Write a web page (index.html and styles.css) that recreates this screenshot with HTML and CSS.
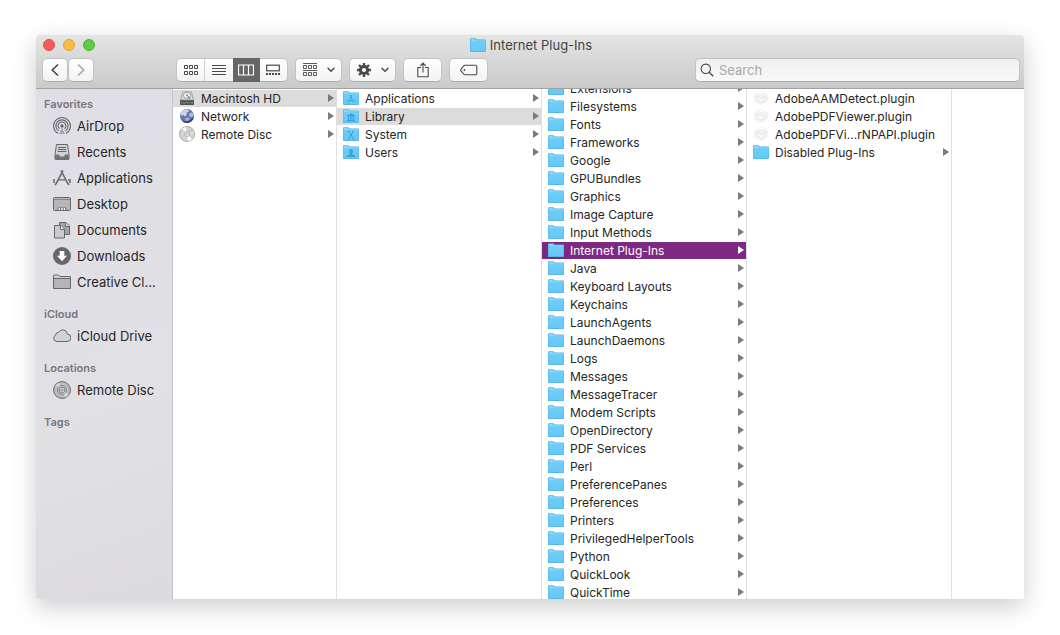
FILE: index.html
```html
<!DOCTYPE html>
<html lang="en">
<head>
	<meta charset="utf-8">
	<title>Internet Plug-Ins</title>
	<meta name="viewport" content="width=device-width, initial-scale=1">
	<link rel="stylesheet" href="styles.css">
</head>
<body>

<!-- shared icons -->
<svg class="sprite" aria-hidden="true">
	<defs>
		<linearGradient id="blue" x1="0" y1="0" x2="0" y2="1">
			<stop offset="0" stop-color="#6fcdf8"/>
			<stop offset="1" stop-color="#66c8f6"/>
		</linearGradient>
	</defs>
	<symbol id="folder" viewBox="0 0 16 14">
		<path fill="#4fb0e2" d="M0 1.2Q0 .2 1 .2H5Q5.6.2 6 .8L6.5 1.6H15Q16 1.6 16 2.6V13Q16 14 15 14H1Q0 14 0 13Z"/>
		<path fill="#8ad8fb" d="M.7 1.4Q.7.9 1.2.9H4.9L5.8 2.3H15.3V4H.7Z"/>
		<rect x=".5" y="3" width="15" height="10.3" fill="url(#blue)"/>
	</symbol>
	<symbol id="plugin" viewBox="0 0 16 16">
		<path fill="#f3f3f3" stroke="#e9e9e9" stroke-width=".6" d="M1 5.5 3.500 3 8 4.600 12.500 3 15 5.500 14 11 8 14.500 2 11Z"/>
		<path fill="#fbfbfb" stroke="#dedede" stroke-width=".7" d="M4 6.3 8 8.6 12 6.3 11 10.4 8 12 5 10.4Z"/>
		<path stroke="#e8e8e8" stroke-width="1" stroke-dasharray="1 1" fill="none" d="M5 2 8 1 11 2M1 12 3 14"/>
	</symbol>
	<symbol id="disc" viewBox="0 0 18 18">
		<circle cx="9" cy="9" r="8.4" fill="#bcbcbf" stroke="#68686b" stroke-width="1"/>
		<path fill="#d9d9dc" d="M9 9 2.5 4.6A8 8 0 0 1 6 1.7ZM9 9 15.5 13.4A8 8 0 0 1 12 16.3Z"/>
		<circle cx="9" cy="9" r="4.6" fill="none" stroke="#7d7d80" stroke-width=".7"/>
		<circle cx="9" cy="9" r="2.9" fill="#d8d8db" stroke="#727275" stroke-width=".8"/>
		<circle cx="9" cy="9" r="1.1" fill="#eee" stroke="#727275" stroke-width=".7"/>
	</symbol>
	<symbol id="chevron" viewBox="0 0 8 6">
		<path d="M1 1.2 4 4.3 7 1.2" fill="none" stroke="#4a4a4a" stroke-width="1.4" stroke-linecap="round"/>
	</symbol>
</svg>

<main class="window">
	<header class="toolbar">
		<div class="titlebar">
			<div class="lights">
				<button class="light red" aria-label="Close"></button>
				<button class="light yellow" aria-label="Minimize"></button>
				<button class="light green" aria-label="Zoom"></button>
			</div>
			<h1 class="title"><svg class="folder"><use href="#folder"/></svg>Internet Plug-Ins</h1>
		</div>
		<div class="tools">
			<div class="nav">
				<button class="btn" aria-label="Back"><svg width="10" height="14" viewBox="0 0 10 14"><path d="M8 1.5 2.2 7 8 12.5" fill="none" stroke="#404040" stroke-width="1.5"/></svg></button>
				<button class="btn" aria-label="Forward"><svg width="10" height="14" viewBox="0 0 10 14"><path d="M2 1.5 7.8 7 2 12.5" fill="none" stroke="#a6a6a6" stroke-width="1.5"/></svg></button>
			</div>
			<div class="views">
				<button aria-label="Icons"><svg width="16" height="12" viewBox="0 0 16 12"><path d="M1.5 1.5h3v3h-3zM6.5 1.5h3v3h-3zM11.5 1.5h3v3h-3zM1.5 7.5h3v3h-3zM6.5 7.5h3v3h-3zM11.5 7.5h3v3h-3z" fill="none" stroke="#4a4a4a"/></svg></button>
				<button aria-label="List"><svg width="14" height="12" viewBox="0 0 14 12"><path d="M0 1.5h14M0 4.5h14M0 7.5h14M0 10.5h14" stroke="#4a4a4a"/></svg></button>
				<button class="active" aria-label="Columns"><svg width="16" height="12" viewBox="0 0 16 12"><path d="M.5 1v10M5.5 1v10M10.5 1v10M15.5 1v10M0 1h16M0 11h16" fill="none" stroke="#fff" stroke-width="1.2"/></svg></button>
				<button aria-label="Gallery"><svg width="14" height="12" viewBox="0 0 14 12"><rect x=".7" y="1.2" width="12.6" height="5.6" fill="none" stroke="#4a4a4a" stroke-width="1.2"/><path d="M0 10h14" stroke="#4a4a4a" stroke-width="2" stroke-dasharray="2 1"/></svg></button>
			</div>
			<button class="btn menu" aria-label="Group items"><svg width="16" height="14" viewBox="0 0 16 14"><path d="M1 .5h14M1 7.5h14M1.5 2.5h3v3h-3zM6.5 2.5h3v3h-3zM11.5 2.5h3v3h-3zM1.5 9.5h3v3h-3zM6.5 9.5h3v3h-3zM11.5 9.5h3v3h-3z" fill="none" stroke="#4a4a4a" stroke-width=".9"/></svg><svg class="chevron"><use href="#chevron"/></svg></button>
			<button class="btn menu" aria-label="Action"><svg width="16" height="16" viewBox="0 0 16 16"><circle cx="8" cy="8" r="3.6" fill="none" stroke="#4a4a4a" stroke-width="3"/><path d="M8 1v3M8 12v3M1 8h3M12 8h3M3 3l2.2 2.2M10.8 10.8 13 13M3 13l2.2-2.2M10.8 5.2 13 3" stroke="#4a4a4a" stroke-width="2.4"/></svg><svg class="chevron"><use href="#chevron"/></svg></button>
			<button class="btn wide" aria-label="Share"><svg width="12" height="16" viewBox="0 0 12 16"><path d="M4 5.5H.8v9.3h10.4V5.5H8M6 10.5V1M3.2 3.8 6 1l2.8 2.8" fill="none" stroke="#4a4a4a" stroke-width="1.1"/></svg></button>
			<button class="btn wide" aria-label="Edit tags"><svg width="18" height="12" viewBox="0 0 18 12"><path d="M5.2 1.2H15.4Q16.8 1.2 16.8 2.6V9.4Q16.8 10.8 15.4 10.8H5.2Q4.4 10.8 3.8 10.2L1.2 7.2Q.4 6 1.2 4.8L3.8 1.8Q4.4 1.2 5.2 1.2Z" fill="none" stroke="#4a4a4a" stroke-width="1.1"/><circle cx="4.4" cy="6" r=".9" fill="#4a4a4a"/></svg></button>
			<label class="search">
				<svg width="14" height="14" viewBox="0 0 14 14"><circle cx="5.8" cy="5.8" r="4.7" fill="none" stroke="#4a4a4a" stroke-width="1.1"/><path d="m9.2 9.2 4 4" stroke="#4a4a4a" stroke-width="1.3"/></svg>
				<input type="search" placeholder="Search" aria-label="Search">
			</label>
		</div>
	</header>

	<div class="content">
		<nav class="sidebar">
			<h2>Favorites</h2>
			<ul>
				<li><a href="#"><svg viewBox="0 0 18 18"><g fill="none" stroke="#68686b" stroke-width="1.1"><path d="M5 16.3A8.4 8.4 0 1 1 13 16.3"/><path d="M5.6 14A6.1 6.1 0 1 1 12.4 14"/><path d="M6.4 11.8A3.9 3.9 0 1 1 11.6 11.8"/></g><circle cx="9" cy="9" r="1.7" fill="#68686b"/><path d="M9 10.500 12 17H6Z" fill="#a5a5a9"/></svg>AirDrop</a></li>
				<li><a href="#"><svg viewBox="0 0 18 18"><path d="M3.5 1.5h11l1.5 10v4.2q0 .8-.8.8H2.8q-.8 0-.8-.8v-4.2Z" fill="#d3d3d6" stroke="#68686b"/><path d="M5 4.5h8M4.8 6.5h8.4M4.6 8.5h8.8" stroke="#68686b"/><path d="M2 11.5h4l1 2h4l1-2h4v4.2q0 .8-.8.8H2.8q-.8 0-.8-.8Z" fill="#747477"/></svg>Recents</a></li>
				<li><a href="#"><svg viewBox="0 0 18 18"><g fill="none" stroke="#68686b" stroke-width="1.6"><path d="M8 1.5 14.5 14l1.5 2M10 1.5 3.5 14l-1.5 2"/><path d="M0 11h2M5.5 10.8h6.5M15 11h3M0 13h2M16 13h2" stroke-width="1.3"/></g></svg>Applications</a></li>
				<li><a href="#"><svg viewBox="0 0 18 18"><rect x=".5" y="2.5" width="17" height="13" rx="1" fill="#b6b6b9" stroke="#68686b"/><path d="M1 4.5h16" stroke="#89898c"/><path d="M4.5 15v-2.5h9V15Z" fill="#68686b"/><path d="M5.5 14h7" stroke="#eee" stroke-width="2" stroke-dasharray="1.6 1"/></svg>Desktop</a></li>
				<li><a href="#"><svg viewBox="0 0 18 18"><path d="M6.5 1.5H13l3.5 3.5v8.5h-10Z" fill="#a4a4a8" stroke="#68686b"/><path d="M12.5 1.5v4h4" fill="#ddd" stroke="#68686b"/><path d="M1.5 4.5H8L11.5 8v9h-10Z" fill="#cbcbce" stroke="#68686b"/><path d="M7.5 4.5v4h4" fill="#eee" stroke="#68686b"/></svg>Documents</a></li>
				<li><a href="#"><svg viewBox="0 0 18 18"><circle cx="9" cy="9" r="9" fill="#68686b"/><path d="M6.7 4h4.6v4.8H14L9 14.2 4 8.8h2.7Z" fill="#fff"/></svg>Downloads</a></li>
				<li><a href="#"><svg viewBox="0 0 18 18"><path d="M.5 2.5q0-.5.5-.5h4.5l1.2 1.5H17q.5 0 .5.5v11.5H.5Z" fill="#d3d3d6" stroke="#68686b"/><path d="M1 6h16v9H1Z" fill="#b5b5b8"/><path d="M1 5.5h16" stroke="#68686b"/></svg>Creative Cl...</a></li>
			</ul>
			<h2>iCloud</h2>
			<ul>
				<li><a href="#"><svg viewBox="0 0 18 18"><path d="M3.800 14.500A3.300 3.300 0 0 1 2.600 8.200 2.800 2.800 0 0 1 5.600 5.400 4.600 4.600 0 0 1 14.300 7.100 3.700 3.700 0 0 1 14 14.500Z" fill="#d3d3d6" stroke="#68686b"/></svg>iCloud Drive</a></li>
			</ul>
			<h2>Locations</h2>
			<ul>
				<li><a href="#"><svg><use href="#disc"/></svg>Remote Disc</a></li>
			</ul>
			<h2>Tags</h2>
		</nav>

		<div class="column narrow">
			<ul>
				<li><a class="parent open" href="#"><svg viewBox="0 0 16 16"><path d="M3.3 1h9.4L15 10v4.5H1V10Z" fill="#9ba3a6"/><path d="M4 1.5h8L13.8 9.5H2.2Z" fill="#d5dbdd"/><ellipse cx="8" cy="5.3" rx="3.7" ry="3.1" fill="#eef2f3" stroke="#7f898d" stroke-width=".8"/><path d="m8 5 2.8 3.8" stroke="#60696d"/><circle cx="8" cy="5.2" r="1" fill="#899498"/><rect x="1" y="10.3" width="14" height="4.7" rx=".8" fill="#4d5254"/><path d="M2 12.8h9" stroke="#85898b"/><circle cx="13" cy="12.8" r=".7" fill="#ccc"/></svg>Macintosh HD</a></li>
				<li><a class="parent" href="#"><svg viewBox="0 0 16 16"><circle cx="8" cy="8" r="7" fill="#6675aa"/><path d="M2 4.5Q5 .5 9 1.5L10 3.5 7.5 5 8 7 5.5 8.5 4.5 7 2 8Z" fill="#cbd3e9"/><path d="m10.5 5 3-.5 1.3 3-2.2 1.8L10 8Z" fill="#aebbdc"/><path d="m6 10 3-.5 2 2-1.5 3H7Z" fill="#a4b1d5"/><path d="M14.7 9A7 7 0 0 1 2.5 12.5Q9 15 14.7 9Z" fill="#323e77"/></svg>Network</a></li>
				<li><a class="parent" href="#"><svg viewBox="0 0 16 16"><circle cx="8" cy="8" r="7.5" fill="#d4d4d4" stroke="#999" stroke-width=".8"/><path d="M8 8 3.2 2.8A7 7 0 0 1 7 1Z" fill="#fafafa"/><path d="M8 8 12.8 13.2A7 7 0 0 1 9 15Z" fill="#fff"/><path d="M8 8 14.7 5.6A7 7 0 0 1 15 8Z" fill="#dfeab3"/><path d="M8 8 12.5 2.6 14 4.3Z" fill="#cbb9df"/><path d="M8 8 1.3 10.4A7 7 0 0 1 1 8Z" fill="#bfdfd2"/><circle cx="8" cy="8" r="2.6" fill="#eee" stroke="#a5a5a5" stroke-width=".7"/><circle cx="8" cy="8" r="1.1" fill="#fff" stroke="#999" stroke-width=".6"/></svg>Remote Disc</a></li>
			</ul>
		</div>

		<div class="column">
			<ul>
				<li><a class="parent" href="#"><svg class="folder" viewBox="0 0 16 14"><use href="#folder"/><path d="M7.3 4 11 12M8.7 4 5 12M3 9.5h1.5M6.5 9.5h3M11.5 9.5H13" fill="none" stroke="#3b9fd8" stroke-width=".9"/></svg>Applications</a></li>
				<li><a class="parent open" href="#"><svg class="folder" viewBox="0 0 16 14"><use href="#folder"/><path d="M4 6.5 8 4.2l4 2.3v.7H4ZM4 11h8v1.2H4ZM5 7h1v4H5ZM7 7h.8v4H7ZM8.6 7h.8v4h-.8ZM10.3 7h1v4h-1Z" fill="#3b9fd8"/></svg>Library</a></li>
				<li><a class="parent" href="#"><svg class="folder" viewBox="0 0 16 14"><use href="#folder"/><path d="M5.7 4.5 10.5 12M10.3 4.5 5.5 12M4.8 4.5H7M9.3 4.5H11M4.6 12h1.8M9.4 12h2" fill="none" stroke="#3b9fd8"/></svg>System</a></li>
				<li><a class="parent" href="#"><svg class="folder" viewBox="0 0 16 14"><use href="#folder"/><path d="M8 4q2 0 2 2.2 0 1.5-1 2.3v.8l2.5.9q.8.4.8 1.8H3.7q0-1.4.8-1.8L7 9.3v-.8q-1-.8-1-2.3Q6 4 8 4Z" fill="#3b9fd8"/></svg>Users</a></li>
			</ul>
		</div>

		<div class="column scrolled">
			<ul>
				<li><a class="parent" href="#"><svg class="folder"><use href="#folder"/></svg>Extensions</a></li>
				<li><a class="parent" href="#"><svg class="folder"><use href="#folder"/></svg>Filesystems</a></li>
				<li><a class="parent" href="#"><svg class="folder"><use href="#folder"/></svg>Fonts</a></li>
				<li><a class="parent" href="#"><svg class="folder"><use href="#folder"/></svg>Frameworks</a></li>
				<li><a class="parent" href="#"><svg class="folder"><use href="#folder"/></svg>Google</a></li>
				<li><a class="parent" href="#"><svg class="folder"><use href="#folder"/></svg>GPUBundles</a></li>
				<li><a class="parent" href="#"><svg class="folder"><use href="#folder"/></svg>Graphics</a></li>
				<li><a class="parent" href="#"><svg class="folder"><use href="#folder"/></svg>Image Capture</a></li>
				<li><a class="parent" href="#"><svg class="folder"><use href="#folder"/></svg>Input Methods</a></li>
				<li><a class="parent selected" href="#"><svg class="folder"><use href="#folder"/></svg>Internet Plug-Ins</a></li>
				<li><a class="parent" href="#"><svg class="folder"><use href="#folder"/></svg>Java</a></li>
				<li><a class="parent" href="#"><svg class="folder"><use href="#folder"/></svg>Keyboard Layouts</a></li>
				<li><a class="parent" href="#"><svg class="folder"><use href="#folder"/></svg>Keychains</a></li>
				<li><a class="parent" href="#"><svg class="folder"><use href="#folder"/></svg>LaunchAgents</a></li>
				<li><a class="parent" href="#"><svg class="folder"><use href="#folder"/></svg>LaunchDaemons</a></li>
				<li><a class="parent" href="#"><svg class="folder"><use href="#folder"/></svg>Logs</a></li>
				<li><a class="parent" href="#"><svg class="folder"><use href="#folder"/></svg>Messages</a></li>
				<li><a class="parent" href="#"><svg class="folder"><use href="#folder"/></svg>MessageTracer</a></li>
				<li><a class="parent" href="#"><svg class="folder"><use href="#folder"/></svg>Modem Scripts</a></li>
				<li><a class="parent" href="#"><svg class="folder"><use href="#folder"/></svg>OpenDirectory</a></li>
				<li><a class="parent" href="#"><svg class="folder"><use href="#folder"/></svg>PDF Services</a></li>
				<li><a class="parent" href="#"><svg class="folder"><use href="#folder"/></svg>Perl</a></li>
				<li><a class="parent" href="#"><svg class="folder"><use href="#folder"/></svg>PreferencePanes</a></li>
				<li><a class="parent" href="#"><svg class="folder"><use href="#folder"/></svg>Preferences</a></li>
				<li><a class="parent" href="#"><svg class="folder"><use href="#folder"/></svg>Printers</a></li>
				<li><a class="parent" href="#"><svg class="folder"><use href="#folder"/></svg>PrivilegedHelperTools</a></li>
				<li><a class="parent" href="#"><svg class="folder"><use href="#folder"/></svg>Python</a></li>
				<li><a class="parent" href="#"><svg class="folder"><use href="#folder"/></svg>QuickLook</a></li>
				<li><a class="parent" href="#"><svg class="folder"><use href="#folder"/></svg>QuickTime</a></li>
			</ul>
		</div>

		<div class="column">
			<ul>
				<li><a href="#"><svg><use href="#plugin"/></svg>AdobeAAMDetect.plugin</a></li>
				<li><a href="#"><svg><use href="#plugin"/></svg>AdobePDFViewer.plugin</a></li>
				<li><a href="#"><svg><use href="#plugin"/></svg>AdobePDFVi...rNPAPI.plugin</a></li>
				<li><a class="parent" href="#"><svg class="folder"><use href="#folder"/></svg>Disabled Plug-Ins</a></li>
			</ul>
		</div>
	</div>
</main>

</body>
</html>
```
FILE: styles.css
```css
* {
	box-sizing: border-box;
}

html, body {
	height: 100%;
	margin: 0;
}

body {
	display: flex;
	padding: 35px 36px 36px;
	overflow: hidden;
	background: #fff;
	color: #262626;
	font-family: Inter, "Liberation Sans", sans-serif;
	font-size: 12px;
}

ul {
	list-style: none;
	margin: 0;
	padding: 0;
}

a {
	color: inherit;
	text-decoration: none;
}

button, input {
	font: inherit;
	padding: 0;
	border: none;
}

svg {
	flex: none;
}

.sprite {
	position: absolute;
	width: 0;
	height: 0;
}

.window {
	flex: 1;
	min-width: 0;
	display: flex;
	flex-direction: column;
	border-radius: 4px 4px 2px 2px;
	overflow: hidden;
	background: #fff;
	box-shadow: 0 8px 24px rgba(0,0,0,0.2);
}

/* title and tool bar */
.toolbar {
	flex: none;
	background: linear-gradient(#e4e4e4, #cacaca);
	border-bottom: 1px solid #a2a2a2;
	padding: 0 4px 6px 6px;
}

.titlebar {
	display: grid;
	grid-template-columns: 1fr auto 1fr;
	align-items: center;
	height: 20px;
	margin-bottom: 3px;
	padding: 0 1px;
}

.lights {
	display: flex;
	gap: 8px;
}

.light {
	width: 12px;
	height: 12px;
	border-radius: 50%;
}

.red {
	background: #f25e57;
	border: 1px solid #dd4a44;
}

.yellow {
	background: #f8bd45;
	border: 1px solid #dfa236;
}

.green {
	background: #5fcb42;
	border: 1px solid #4bae31;
}

.title {
	display: flex;
	align-items: center;
	gap: 4px;
	margin: 0;
	font-size: 13px;
	line-height: 20px;
	font-weight: 400;
	color: #444;
}

.tools {
	display: flex;
	gap: 7px;
}

.tools button {
	display: flex;
	align-items: center;
	justify-content: center;
}

.btn, .views, .search {
	height: 24px;
	border: 1px solid #c3c3c3;
	border-bottom-color: #adadad;
	border-radius: 5px;
	background: linear-gradient(#fefefe, #f3f3f3);
}

.nav {
	display: flex;
	margin-right: 75px;
}

.nav .btn {
	width: 26px;
}

.views {
	display: flex;
	width: 112px;
}

.views button {
	flex: 1;
	background: none;
}

.views button:first-child {
	border-right: 1px solid #d0d0d0;
}

.views .active {
	background: #666;
	margin: -1px 0;
}

.menu {
	width: 47px;
	gap: 9px;
}

.wide {
	width: 39px;
}

.chevron {
	width: 8px;
	height: 6px;
}

.search {
	display: flex;
	align-items: center;
	flex: 0 1 325px;
	min-width: 100px;
	margin-left: auto;
	padding-left: 4px;
	gap: 5px;
	background: linear-gradient(#f0f0f0, #f8f8f8);
}

.search input {
	flex: 1;
	min-width: 0;
	background: none;
	outline: none;
	font-size: 13px;
}

.search input::placeholder {
	color: #a8a8a8;
}

/* sidebar */
.content {
	flex: 1;
	min-height: 0;
	display: flex;
}

.sidebar {
	flex: none;
	width: 137px;
	overflow: hidden;
	padding: 6px 4px 0 8px;
	background: linear-gradient(160deg, #dfdee4, #e1e1e4 60%, #dcdadf);
	border-right: 1px solid #c3c2c8;
}

.sidebar h2 {
	margin: 0;
	padding-top: 10px;
	font-size: 11px;
	line-height: 18px;
	font-weight: 600;
	color: #77767b;
}

.sidebar h2:first-child {
	padding-top: 0;
}

.sidebar a {
	display: flex;
	align-items: center;
	gap: 6px;
	height: 26px;
	padding-left: 9px;
	font-size: 13px;
	white-space: nowrap;
}

.sidebar svg {
	width: 18px;
	height: 18px;
}

/* file columns */
.column {
	flex: none;
	width: 205px;
	padding-top: 1px;
	overflow: hidden;
	border-right: 1px solid #e0e0e0;
}

.narrow {
	width: 164px;
}

.scrolled ul {
	margin-top: -10px;
}

.column a {
	display: flex;
	align-items: center;
	gap: 6px;
	height: 17px;
	margin-bottom: 1px;
	padding: 0 2px 0 6px;
	line-height: 17px;
	white-space: nowrap;
}

.column svg {
	width: 16px;
	height: 16px;
}

.column .folder, .title .folder {
	width: 16px;
	height: 14px;
}

.column svg, .parent::after {
	margin-bottom: 1px;
}

.parent::after {
	content: "";
	margin-left: auto;
	border-left: 6px solid #7b7b7b;
	border-top: 4px solid transparent;
	border-bottom: 4px solid transparent;
}

.open {
	background: #dcdcdc;
}

.selected {
	background: #7d2881;
	color: #fff;
}

.selected::after {
	border-left-color: #fff;
}
```
